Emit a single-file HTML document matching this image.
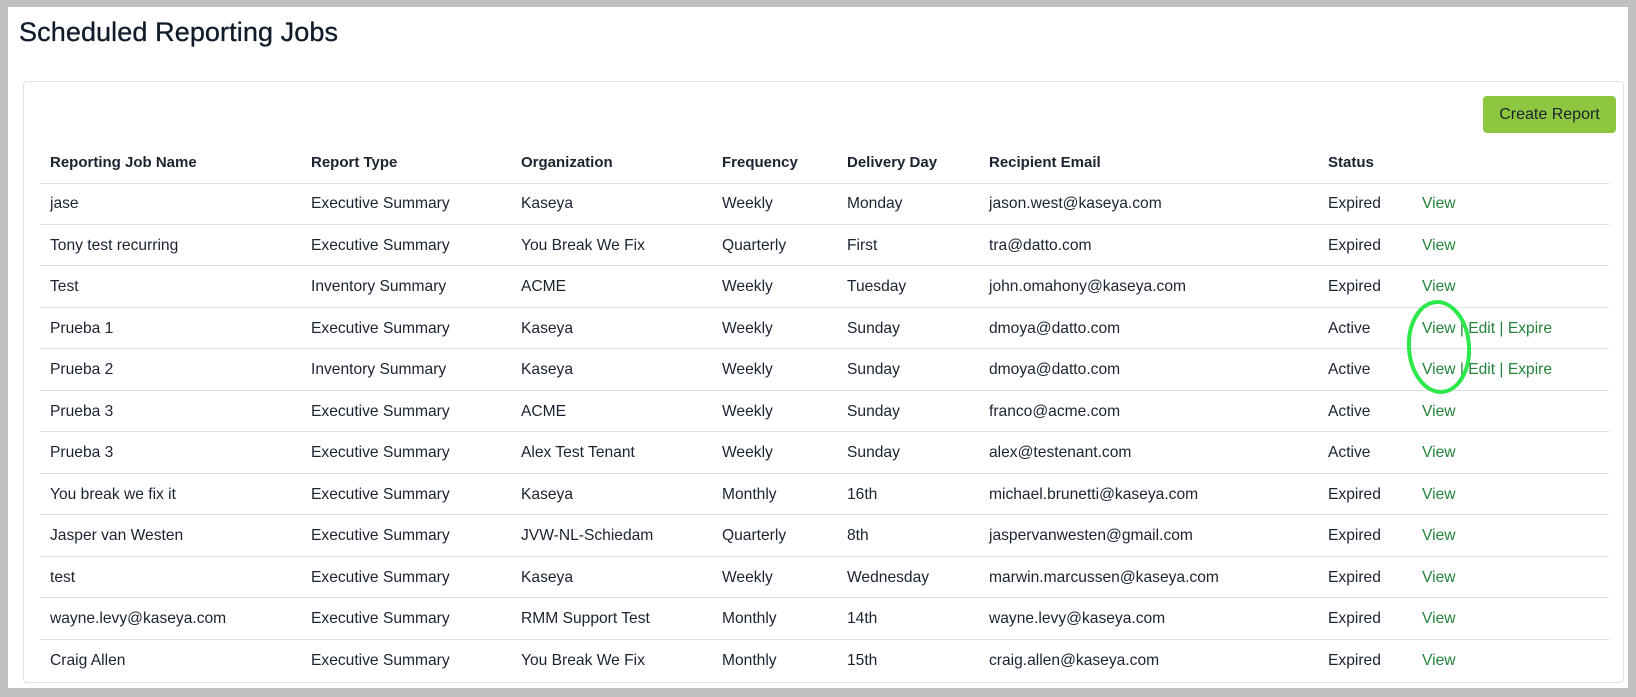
<!DOCTYPE html>
<html><head><meta charset="utf-8"><style>
body{margin:0;width:1636px;height:697px;background:#c0c0c0;position:relative;overflow:hidden;font-family:"Liberation Sans",Arial,sans-serif;color:#1b2330}
.page{position:absolute;left:8px;top:7px;width:1620px;height:681px;background:#fff}
h1{position:absolute;left:19px;top:17px;margin:0;font-size:27px;font-weight:normal;color:#0f1b2a;letter-spacing:0.1px;-webkit-text-stroke:0.3px #0f1b2a}
.card{position:absolute;left:23px;top:81px;width:1599px;height:600px;border:1px solid #e2e2e2;border-radius:4px;background:#fff}
.btn{position:absolute;left:1483px;top:96px;width:133px;height:37px;background:#8dc63f;border-radius:4px;font-size:16px;line-height:37px;text-align:center;color:#1b2330}
.row{position:absolute;left:40px;width:1569px;height:41.5px;font-size:15.6px;line-height:41.5px}
.row.b{border-bottom:1px solid #dedede;box-sizing:border-box}
.row span{position:absolute;white-space:nowrap}
.hdr{font-weight:bold;font-size:15px}
.g{color:#23843a}
</style></head><body>
<div class="page"></div>
<h1>Scheduled Reporting Jobs</h1>
<div class="card"></div>
<div class="btn">Create Report</div>
<div id="t"></div>
<svg style="position:absolute;left:0;top:0" width="1636" height="697"><ellipse cx="1439" cy="347" rx="30" ry="45" transform="rotate(-4 1439 347)" fill="none" stroke="#2de84a" stroke-width="4"/></svg>
<script>
var xs=[50,311,521,722,847,989,1328,1422];
var rows=[
["Reporting Job Name","Report Type","Organization","Frequency","Delivery Day","Recipient Email","Status",""],
["jase","Executive Summary","Kaseya","Weekly","Monday","jason.west@kaseya.com","Expired","V"],
["Tony test recurring","Executive Summary","You Break We Fix","Quarterly","First","tra@datto.com","Expired","V"],
["Test","Inventory Summary","ACME","Weekly","Tuesday","john.omahony@kaseya.com","Expired","V"],
["Prueba 1","Executive Summary","Kaseya","Weekly","Sunday","dmoya@datto.com","Active","A"],
["Prueba 2","Inventory Summary","Kaseya","Weekly","Sunday","dmoya@datto.com","Active","A"],
["Prueba 3","Executive Summary","ACME","Weekly","Sunday","franco@acme.com","Active","V"],
["Prueba 3","Executive Summary","Alex Test Tenant","Weekly","Sunday","alex@testenant.com","Active","V"],
["You break we fix it","Executive Summary","Kaseya","Monthly","16th","michael.brunetti@kaseya.com","Expired","V"],
["Jasper van Westen","Executive Summary","JVW-NL-Schiedam","Quarterly","8th","jaspervanwesten@gmail.com","Expired","V"],
["test","Executive Summary","Kaseya","Weekly","Wednesday","marwin.marcussen@kaseya.com","Expired","V"],
["wayne.levy@kaseya.com","Executive Summary","RMM Support Test","Monthly","14th","wayne.levy@kaseya.com","Expired","V"],
["Craig Allen","Executive Summary","You Break We Fix","Monthly","15th","craig.allen@kaseya.com","Expired","V"]];
var h="";
rows.forEach(function(r,i){
 var top=i==0?142:183+(i-1)*41.5;
 var cls="row"+(i<12?" b":"")+(i==0?" hdr":"");
 h+='<div class="'+cls+'" style="top:'+top+'px">';
 for(var c=0;c<7;c++)h+='<span style="left:'+(xs[c]-40)+'px">'+r[c]+'</span>';
 if(r[7]=="V")h+='<span class="g" style="left:'+(xs[7]-40)+'px">View</span>';
 if(r[7]=="A")h+='<span class="g" style="left:'+(xs[7]-40)+'px">View | Edit | Expire</span>';
 h+='</div>';
});
document.getElementById("t").innerHTML=h;
</script>
</body></html>
